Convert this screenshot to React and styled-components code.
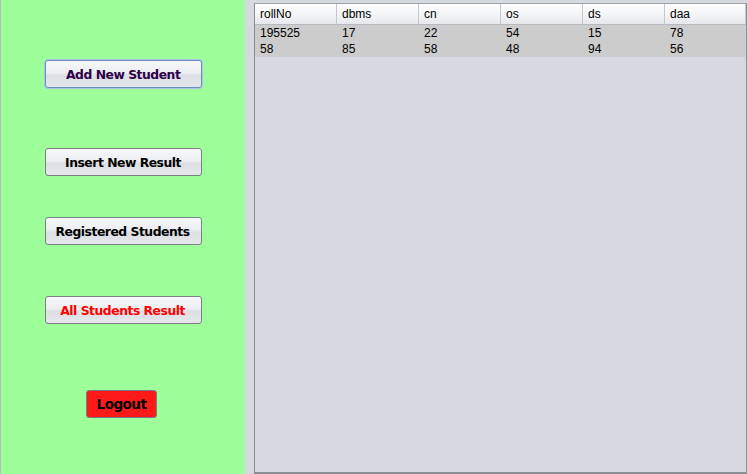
import React from "react";
import styled, { createGlobalStyle } from "styled-components";

const Global = createGlobalStyle`
  html, body { margin: 0; padding: 0; }
  body {
    width: 748px; height: 474px; overflow: hidden;
    background: #d6d9e0;
    font-family: "Liberation Sans", Arial, sans-serif;
  }
`;

const Frame = styled.div`
  display: flex;
  width: 748px;
  height: 474px;
  border-left: 1px solid #b8bcc4;
  box-sizing: border-box;
`;

const SidePanel = styled.div`
  width: 244px;
  height: 474px;
  background: #9cff99;
  display: flex;
  flex-direction: column;
  align-items: center;
  padding-top: 60px;
  box-sizing: border-box;
`;

const Button = styled.button`
  width: ${(p) => p.$w || 157}px;
  height: 28px;
  margin-top: ${(p) => p.$mt || 0}px;
  margin-left: ${(p) => p.$shift || 0}px;
  box-sizing: border-box;
  border: 1px solid ${(p) => (p.$focus ? "#6f8fc0" : "#7a7f88")};
  box-shadow: ${(p) => (p.$focus ? "0 0 0 1px #a9c2e6" : "none")};
  border-radius: 3px;
  background: ${(p) =>
    p.$danger
      ? "#ff1a1a"
      : "linear-gradient(to bottom, #f6f7f9 0%, #eceef1 45%, #dcdfe5 55%, #e4e6ea 100%)"};
  color: ${(p) => p.$color || "#000"};
  font-family: "DejaVu Sans", Tahoma, sans-serif;
  font-weight: bold;
  font-size: ${(p) => (p.$danger ? 13.5 : 13)}px;
  transform-origin: center;
  padding: 0;
  display: flex;
  align-items: center;
  justify-content: center;
`;

const Label = styled.span`
  display: inline-block;
  letter-spacing: -0.5px;
  transform: scaleX(${(p) => p.$sx || 0.95});
  white-space: nowrap;
`;

const TablePanel = styled.div`
  margin-left: 9px;
  margin-top: 3px;
  width: 493px;
  height: 471px;
  box-sizing: border-box;
  border: 1px solid #9ea2a9;
  border-left-color: #8a8e95;
  border-bottom: 2px solid #8a8e95;
  border-right-color: #8a8e95;
  background: #d6d9e0;
  display: flex;
  flex-direction: column;
`;

const Grid = styled.div`
  display: grid;
  grid-template-columns: 82px 82px 82px 82px 82px 1fr;
`;

const HeaderCell = styled.div`
  height: 21px;
  box-sizing: border-box;
  background: linear-gradient(to bottom, #ffffff 0%, #f4f5f7 50%, #e6e8ec 100%);
  border-right: 1px solid #c4c7cc;
  border-bottom: 1px solid #b6b9bf;
  font-size: 12px;
  color: #000;
  padding-left: 5px;
  display: flex;
  align-items: center;
  &:last-child { border-right: none; }
`;

const Cell = styled.div`
  height: 16px;
  background: #cccccc;
  font-size: 12px;
  color: #000;
  padding-left: 5px;
  display: flex;
  align-items: center;
`;

const cols = ["rollNo", "dbms", "cn", "os", "ds", "daa"];
const rows = [
  ["195525", "17", "22", "54", "15", "78"],
  ["58", "85", "58", "48", "94", "56"],
];

export default function App() {
  return (
    <>
      <Global />
      <Frame>
        <SidePanel>
          <Button $focus $color="#2d0048"><Label>Add New Student</Label></Button>
          <Button $mt={60}><Label>Insert New Result</Label></Button>
          <Button $mt={41}><Label>Registered Students</Label></Button>
          <Button $mt={51} $color="#ff0000"><Label>All Students Result</Label></Button>
          <Button $mt={66} $w={71} $shift={-3} $danger><Label $sx={1}>Logout</Label></Button>
        </SidePanel>
        <TablePanel>
          <Grid>
            {cols.map((c) => (
              <HeaderCell key={c}>{c}</HeaderCell>
            ))}
            {rows.map((r, i) =>
              r.map((v, j) => <Cell key={i + "-" + j}>{v}</Cell>)
            )}
          </Grid>
        </TablePanel>
      </Frame>
    </>
  );
}
